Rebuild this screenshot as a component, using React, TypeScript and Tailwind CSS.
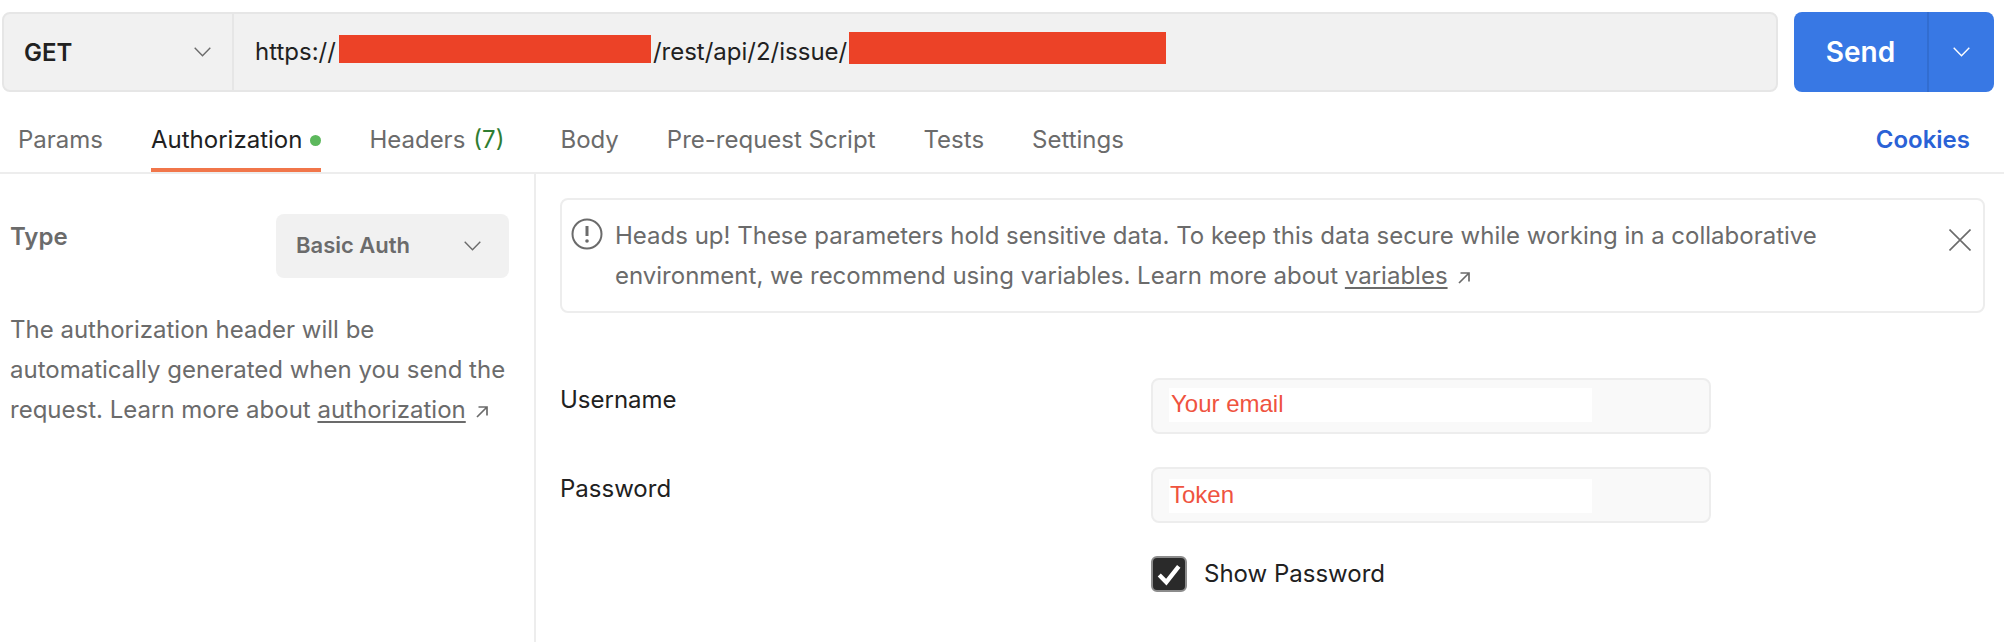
import React from 'react';

const Chevron = ({ className }: { className: string }) => (
  <svg viewBox="0 0 17 10" className={className} fill="none" stroke="currentColor" strokeWidth="1.4">
    <path d="M0.7 0.7 L8.5 8.8 L16.3 0.7" />
  </svg>
);

const LinkArrow = () => (
  <svg viewBox="0 0 12 12" className="inline-block w-3 h-3 ml-[10px] align-[0px]" fill="none" stroke="#6b6b6b" strokeWidth="1.7">
    <path d="M1 11 L11 1 M2.5 1 H11 V9.5" />
  </svg>
);

const tabs = ['Body', 'Pre-request Script', 'Tests', 'Settings'];

const App: React.FC = () => {
  return (
    <div className="h-[642px] w-[2004px] overflow-hidden bg-white font-['Inter',sans-serif] text-2xl text-[#6b6b6b] flex flex-col">
      {/* url bar */}
      <div className="flex gap-4 pt-3 pl-[2px] pr-[10px] h-[92px] shrink-0">
        <div className="flex flex-1 h-20 rounded-lg border-2 border-[#e6e6e6] bg-[#f1f1f1]">
          <div className="w-[230px] shrink-0 border-r-2 border-[#e6e6e6] flex items-center justify-between pl-5 pr-[21px]">
            <span className="font-semibold text-[#212121] pt-[2px]">GET</span>
            <Chevron className="w-[17px] h-[10px] text-[#6b6b6b]" />
          </div>
          <div className="flex items-center pl-[21px] text-[#212121]">
            <span>https://</span>
            <span className="w-[312px] h-[28px] bg-[#ec4227] ml-[3px] mr-[2px] mb-[6px] shrink-0" />
            <span>/rest/api/2/issue/</span>
            <span className="w-[317px] h-8 bg-[#ec4227] ml-[2px] mb-2 shrink-0" />
          </div>
        </div>
        <div className="flex w-[200px] h-20 rounded-lg bg-[#3878e4] text-white">
          <div className="w-[135px] border-r-2 border-[#326dd0] flex items-center justify-center pt-[2px] text-[28px] font-semibold">
            Send
          </div>
          <div className="flex-1 flex items-center justify-center">
            <Chevron className="w-[17px] h-[10px]" />
          </div>
        </div>
      </div>

      {/* request tabs */}
      <div className="flex h-[82px] shrink-0 items-stretch gap-12 border-b-2 border-[#ededed] pl-[18px] pr-[34px]">
        <div className="flex items-center pt-[16px]">Params</div>
        <div className="relative flex items-center gap-2 pt-[16px] text-[#212121]">
          Authorization
          <span className="w-[11px] h-[11px] rounded-full bg-[#5cb85c]" />
          <span className="absolute left-0 right-0 bottom-0 h-1 bg-[#f1764a]" />
        </div>
        <div className="flex items-center pt-[16px] mr-2">
          Headers<span className="ml-2 text-[#2f7d32]">(7)</span>
        </div>
        {tabs.map((t) => (
          <div key={t} className="flex items-center pt-[16px]">{t}</div>
        ))}
        <div className="ml-auto flex items-center pt-[16px] font-semibold text-[#2a62d6]">Cookies</div>
      </div>

      <div className="flex flex-1 min-h-0">
        {/* left: auth type */}
        <div className="w-[536px] shrink-0 border-r-2 border-[#ededed] pl-[10px] pr-[25px] pt-10">
          <div className="flex items-start justify-between">
            <span className="font-semibold -mt-[1px] leading-[48px] h-10">Type</span>
            <div className="flex items-center justify-between w-[233px] h-16 rounded-lg bg-[#f1f1f1] pl-5 pr-[28px] text-[22px]">
              <span className="font-semibold">Basic Auth</span>
              <Chevron className="w-[17px] h-[10px]" />
            </div>
          </div>
          <p className="mt-[32px] leading-10 w-[510px]">
            The authorization header will be automatically generated when you send the request. Learn more about{' '}
            <span className="underline underline-offset-[3px]">authorization</span>
            <LinkArrow />
          </p>
        </div>

        {/* right: form */}
        <div className="flex-1 pl-6 pr-[19px] pt-6">
          <div className="relative h-[115px] rounded-lg border-2 border-[#ededed] flex gap-[12px] pl-[9px] pt-[16px]">
            <svg viewBox="0 0 32 32" className="w-8 h-8 shrink-0 mt-[2px]" fill="none" stroke="#6b6b6b" strokeWidth="2">
              <circle cx="16" cy="16" r="14.5" />
              <path d="M16 8 V18" strokeWidth="3" />
              <circle cx="16" cy="23" r="1.8" fill="#6b6b6b" stroke="none" />
            </svg>
            <p className="leading-10 w-[1240px]">
              Heads up! These parameters hold sensitive data. To keep this data secure while working in a collaborative environment, we recommend using variables. Learn more about{' '}
              <span className="underline underline-offset-[3px]">variables</span>
              <LinkArrow />
            </p>
            <svg viewBox="0 0 22 22" className="absolute right-[12px] top-[29px] w-[22px] h-[22px]" fill="none" stroke="#6b6b6b" strokeWidth="1.6">
              <path d="M0.5 0.5 L21.5 21.5 M21.5 0.5 L0.5 21.5" />
            </svg>
          </div>

          <div className="mt-[65px] flex items-start">
            <span className="w-[591px] shrink-0 leading-10 pt-[2px] text-[#212121]">Username</span>
            <div className="w-[560px] h-14 rounded-lg border-2 border-[#ededed] bg-[#f9f9f9] pl-4 pt-2">
              <div className="w-[423px] h-[34px] bg-white pl-[2px] font-['Liberation_Sans',sans-serif] text-2xl leading-[32px] text-[#ef5340]">Your email</div>
            </div>
          </div>
          <div className="mt-[33px] flex items-start">
            <span className="w-[591px] shrink-0 leading-10 pt-[2px] text-[#212121]">Password</span>
            <div className="w-[560px] h-14 rounded-lg border-2 border-[#ededed] bg-[#f9f9f9] pl-4 pt-[10px]">
              <div className="w-[423px] h-[34px] bg-white pl-[1px] font-['Liberation_Sans',sans-serif] text-2xl leading-[32px] text-[#ef5340]">Token</div>
            </div>
          </div>
          <div className="mt-[33px] ml-[591px] flex items-center gap-[17px]">
            <span className="w-9 h-9 rounded-md border-2 border-[#8c8c8c] bg-[#2a2a2a] flex items-center justify-center">
              <svg viewBox="0 0 24 24" className="w-[26px] h-[26px]" fill="none" stroke="#fff" strokeWidth="4">
                <path d="M3 13 L9.5 19.5 L21 5" />
              </svg>
            </span>
            <span className="text-[#212121]">Show Password</span>
          </div>
        </div>
      </div>
    </div>
  );
};

export default App;
